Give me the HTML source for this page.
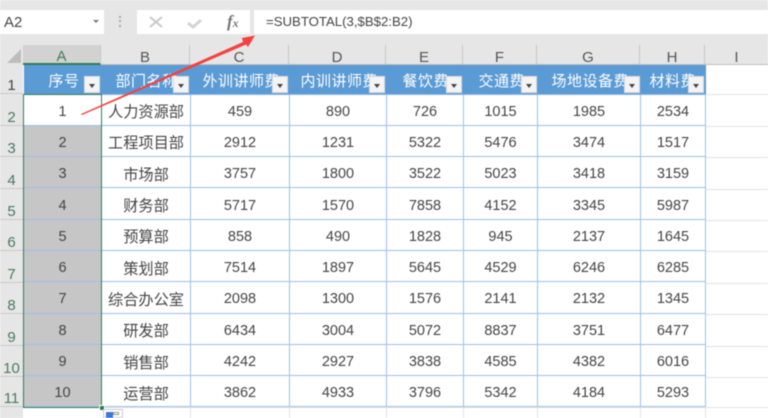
<!DOCTYPE html>
<html><head><meta charset="utf-8">
<style>
html,body{margin:0;padding:0;width:768px;height:418px;overflow:hidden;background:#fff}
#w{position:relative;width:768px;height:418px;overflow:hidden;font-family:"Liberation Sans","Noto Sans CJK SC",sans-serif;filter:blur(.4px);color:#444}
.a{position:absolute}
.hc{position:absolute;top:45px;height:20px;line-height:25px;text-align:center;font-size:15px;color:#555;background:#e6e6e6;border-right:1px solid #c6c6c6;box-sizing:border-box}
.rh{position:absolute;left:0;width:23px;background:#e6e6e6;text-align:center;font-size:15px;color:#4a7a5f;border-bottom:1px solid #c9c9c9;box-sizing:border-box}
table{position:absolute;left:23px;top:65px;border-collapse:collapse;table-layout:fixed;width:682px}
td,th{padding:0;text-align:center;font-weight:normal;font-size:14.5px;color:#444;border:1px solid #9dbfe6;white-space:nowrap;overflow:hidden;box-sizing:border-box}
th{background:#5b9bd5;color:#fff;height:29px;border:0;border-bottom:1px solid #8db4e2;font-size:15px;letter-spacing:.5px;text-align:left}
th span{display:block;position:relative;top:1px}
td{height:31.3px;padding-top:4px}
td.c{font-size:15.2px;padding-top:3px}
td.g{background:#c6c6c6}
.b{position:absolute;top:76px;width:16px;height:17px;background:#f4f4f4;border:1px solid #ddd;box-sizing:border-box}
.b:after{content:"";position:absolute;left:4px;top:7px;border:3.5px solid transparent;border-top:4px solid #444;border-bottom:0}
.gl{position:absolute;background:#e2e2e2}
</style></head><body><div id="w">
<div class="a" style="left:0;top:0;width:768px;height:45px;background:#e6e6e6"></div>
<div class="a" style="left:0;top:10px;width:104px;height:24px;background:#fff;font-size:15px;line-height:25px;text-indent:4px;color:#444">A2</div>
<div class="a" style="left:93px;top:20px;border:3px solid transparent;border-top:3px solid #777;border-bottom:0"></div>
<div class="a" style="left:119px;top:16px;width:2px;height:2px;background:#aaa;box-shadow:0 4px 0 #aaa,0 9px 0 #aaa"></div>
<div class="a" style="left:137px;top:10px;width:113px;height:24px;background:#fff"></div>
<svg class="a" style="left:137px;top:10px" width="113" height="24"><path d="M13 7L25 17M25 7L13 17" stroke="#c9c9c9" stroke-width="2" fill="none"/><path d="M51 13L56 17L64 10" stroke="#d5d5d5" stroke-width="3" fill="none"/><text x="90" y="17" font-family="Liberation Serif" font-style="italic" font-weight="bold" font-size="17" fill="#777">f<tspan font-size="12">x</tspan></text></svg>
<div class="a" style="left:254px;top:10px;width:514px;height:24px;background:#fff;font-size:13.2px;line-height:23px;text-indent:12px;color:#444">=SUBTOTAL(3,$B$2:B2)</div>

<div class="a" style="left:0;top:45px;width:23px;height:20px;background:#e6e6e6"></div>
<div class="a" style="left:7px;top:49px;width:0;height:0;border-left:14px solid transparent;border-bottom:14px solid #bdbdbd"></div>
<div class="hc" style="left:23px;width:78px;background:#d2d2d2;color:#3f7a5c;border-bottom:2px solid #2f7d57;line-height:24px">A</div>
<div class="hc" style="left:101px;width:89px">B</div>
<div class="hc" style="left:190px;width:99px">C</div>
<div class="hc" style="left:289px;width:97px">D</div>
<div class="hc" style="left:386px;width:77px">E</div>
<div class="hc" style="left:463px;width:74px">F</div>
<div class="hc" style="left:537px;width:103px">G</div>
<div class="hc" style="left:640px;width:65px">H</div>
<div class="hc" style="left:705px;width:63px;border-right:0">I</div>
<div class="a" style="left:101px;top:64px;width:667px;height:1px;background:#bdbdbd"></div>

<div class="rh" style="top:65px;height:29px;line-height:41px;color:#444">1</div>
<div class="rh" style="top:94px;height:32px;line-height:47px">2</div>
<div class="rh" style="top:126px;height:31px;line-height:46px">3</div>
<div class="rh" style="top:157px;height:32px;line-height:47px">4</div>
<div class="rh" style="top:189px;height:31px;line-height:46px">5</div>
<div class="rh" style="top:220px;height:31px;line-height:46px">6</div>
<div class="rh" style="top:251px;height:32px;line-height:47px">7</div>
<div class="rh" style="top:283px;height:31px;line-height:46px">8</div>
<div class="rh" style="top:314px;height:32px;line-height:47px">9</div>
<div class="rh" style="top:346px;height:31px;line-height:46px">10</div>
<div class="rh" style="top:377px;height:30px;line-height:44px">11</div>
<div class="a" style="left:0;top:407px;width:23px;height:11px;background:#e6e6e6"></div>

<div class="gl" style="left:705px;top:94px;width:63px;height:1px"></div>
<div class="gl" style="left:705px;top:126px;width:63px;height:1px"></div>
<div class="gl" style="left:705px;top:157px;width:63px;height:1px"></div>
<div class="gl" style="left:705px;top:189px;width:63px;height:1px"></div>
<div class="gl" style="left:705px;top:220px;width:63px;height:1px"></div>
<div class="gl" style="left:705px;top:251px;width:63px;height:1px"></div>
<div class="gl" style="left:705px;top:283px;width:63px;height:1px"></div>
<div class="gl" style="left:705px;top:314px;width:63px;height:1px"></div>
<div class="gl" style="left:705px;top:346px;width:63px;height:1px"></div>
<div class="gl" style="left:705px;top:377px;width:63px;height:1px"></div>
<div class="gl" style="left:23px;top:407px;width:745px;height:1px"></div>
<div class="gl" style="left:190px;top:408px;width:1px;height:10px"></div>
<div class="gl" style="left:289px;top:408px;width:1px;height:10px"></div>
<div class="gl" style="left:386px;top:408px;width:1px;height:10px"></div>
<div class="gl" style="left:463px;top:408px;width:1px;height:10px"></div>
<div class="gl" style="left:537px;top:408px;width:1px;height:10px"></div>
<div class="gl" style="left:640px;top:408px;width:1px;height:10px"></div>
<div class="gl" style="left:705px;top:408px;width:1px;height:10px"></div>

<table>
<colgroup><col style="width:78px"><col style="width:89px"><col style="width:99px"><col style="width:97px"><col style="width:77px"><col style="width:74px"><col style="width:103px"><col style="width:65px"></colgroup>
<tr><th><span style="padding-left:25px">序号</span></th><th><span style="padding-left:14px">部门名称</span></th><th><span style="padding-left:12px">外训讲师费</span></th><th><span style="padding-left:11px">内训讲师费</span></th><th><span style="padding-left:16px">餐饮费</span></th><th><span style="padding-left:15px">交通费</span></th><th><span style="padding-left:14px">场地设备费</span></th><th><span style="padding-left:9px">材料费</span></th></tr>
<tr><td>1</td><td class="c">人力资源部</td><td>459</td><td>890</td><td>726</td><td>1015</td><td>1985</td><td>2534</td></tr>
<tr><td class="g">2</td><td class="c">工程项目部</td><td>2912</td><td>1231</td><td>5322</td><td>5476</td><td>3474</td><td>1517</td></tr>
<tr><td class="g">3</td><td class="c">市场部</td><td>3757</td><td>1800</td><td>3522</td><td>5023</td><td>3418</td><td>3159</td></tr>
<tr><td class="g">4</td><td class="c">财务部</td><td>5717</td><td>1570</td><td>7858</td><td>4152</td><td>3345</td><td>5987</td></tr>
<tr><td class="g">5</td><td class="c">预算部</td><td>858</td><td>490</td><td>1828</td><td>945</td><td>2137</td><td>1645</td></tr>
<tr><td class="g">6</td><td class="c">策划部</td><td>7514</td><td>1897</td><td>5645</td><td>4529</td><td>6246</td><td>6285</td></tr>
<tr><td class="g">7</td><td class="c">综合办公室</td><td>2098</td><td>1300</td><td>1576</td><td>2141</td><td>2132</td><td>1345</td></tr>
<tr><td class="g">8</td><td class="c">研发部</td><td>6434</td><td>3004</td><td>5072</td><td>8837</td><td>3751</td><td>6477</td></tr>
<tr><td class="g">9</td><td class="c">销售部</td><td>4242</td><td>2927</td><td>3838</td><td>4585</td><td>4382</td><td>6016</td></tr>
<tr><td class="g">10</td><td class="c">运营部</td><td>3862</td><td>4933</td><td>3796</td><td>5342</td><td>4184</td><td>5293</td></tr>
</table>

<div class="b" style="left:84px"></div>
<div class="b" style="left:173px"></div>
<div class="b" style="left:272px"></div>
<div class="b" style="left:369px"></div>
<div class="b" style="left:446px"></div>
<div class="b" style="left:521px"></div>
<div class="b" style="left:624px"></div>
<div class="b" style="left:688px"></div>

<div class="a" style="left:23px;top:94px;width:79px;height:314px;border:1.5px solid #2f7d57;box-sizing:border-box"></div>
<div class="a" style="left:99px;top:405px;width:4px;height:4px;background:#2f7d57;border:1px solid #fff"></div>
<div class="a" style="left:103px;top:409px;width:20px;height:9px;background:#fff;border:1px solid #ccc;box-sizing:border-box"></div>
<div class="a" style="left:106px;top:412px;width:7px;height:6px;background:#3b78d8"></div>
<div class="a" style="left:113px;top:412px;width:6px;height:3px;border:1px solid #999;box-sizing:border-box"></div>

<svg class="a" style="left:0;top:0" width="768" height="418"><path d="M81 114L243 42L242 38L255 35.5L248 47L246 44.5L82 115Z" fill="#f5413f"/></svg>
</div></body></html>
